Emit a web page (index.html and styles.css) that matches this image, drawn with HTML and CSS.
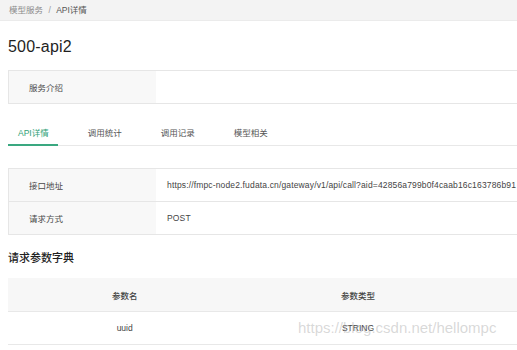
FILE: index.html
```html
<!DOCTYPE html>
<html lang="zh-CN">
<head>
    <meta charset="UTF-8">
    <meta name="viewport" content="width=device-width, initial-scale=1.0">
    <title>API详情</title>
    <link rel="stylesheet" href="styles.css">
</head>
<body>

    <div class="breadcrumb">
        <span class="crumb">模型服务</span>
        <span class="sep">/</span>
        <span class="crumb current">API详情</span>
    </div>

    <div class="page">
        <h1 class="title">500-api2</h1>

        <div class="info-table">
            <div class="info-row">
                <div class="label">服务介绍</div>
                <div class="value"></div>
            </div>
        </div>

        <div class="tabs">
            <div class="tab active">API详情</div>
            <div class="tab">调用统计</div>
            <div class="tab">调用记录</div>
            <div class="tab">模型相关</div>
        </div>

        <div class="info-table detail">
            <div class="info-row">
                <div class="label">接口地址</div>
                <div class="value">https://fmpc-node2.fudata.cn/gateway/v1/api/call?aid=42856a799b0f4caab16c163786b91</div>
            </div>
            <div class="info-row">
                <div class="label">请求方式</div>
                <div class="value">POST</div>
            </div>
        </div>

        <h3 class="section-title">请求参数字典</h3>

        <table class="param-table">
            <thead>
                <tr>
                    <th>参数名</th>
                    <th>参数类型</th>
                    <th></th>
                </tr>
            </thead>
            <tbody>
                <tr>
                    <td>uuid</td>
                    <td>STRING</td>
                    <td></td>
                </tr>
            </tbody>
        </table>
    </div>

    <div class="watermark">https://blog.csdn.net/hellompc</div>

</body>
</html>
```

FILE: styles.css
```css
html, body {
    overflow: hidden;
}

body {
    margin: 0;
    font-family: "Liberation Sans", "Noto Sans CJK SC", sans-serif;
    font-size: 8.5px;
    color: #444;
    background-color: #fff;
    position: relative;
}

.breadcrumb {
    height: 20px;
    line-height: 20px;
    padding-left: 9px;
    background-color: #f3f3f3;
    border-bottom: 1px solid #ebebeb;
    color: #8c8c8c;
}

.breadcrumb .sep {
    margin: 0 3px;
    color: #999;
}

.breadcrumb .current {
    color: #555;
}

.page {
    width: 760px;
    padding-left: 8px;
}

.title {
    margin: 15px 0 12px;
    font-size: 16px;
    line-height: 22px;
    font-weight: normal;
    letter-spacing: 0.2px;
    color: #1f1f1f;
}

.info-table {
    border: 1px solid #e6e6e6;
    border-right: none;
}

.info-row {
    display: flex;
    height: 32px;
    align-items: stretch;
}

.info-row + .info-row {
    border-top: 1px solid #e6e6e6;
}

.label {
    width: 127px;
    padding-left: 20px;
    background-color: #f8f8f8;
    display: flex;
    align-items: center;
    color: #4a4a4a;
}

.value {
    flex: 1;
    padding-left: 11px;
    display: flex;
    align-items: center;
    white-space: nowrap;
    letter-spacing: 0.15px;
    color: #444;
}

.tabs {
    display: flex;
    margin-top: 16px;
    border-bottom: 1px solid #e8e8e8;
}

.tab {
    padding: 6px 9px 4px 10px;
    line-height: 14px;
    margin-right: 20px;
    margin-bottom: -1px;
    border-bottom: 2px solid transparent;
    color: #555;
}

.tab.active {
    color: #2f9f78;
    border-bottom-color: #3aa880;
}

.detail {
    margin-top: 22px;
}

.section-title {
    margin: 15px 0 12px;
    font-size: 11px;
    line-height: 16px;
    font-weight: 500;
    color: #222;
}

.param-table {
    border-collapse: collapse;
    table-layout: fixed;
    width: 700px;
}

.param-table th,
.param-table td {
    width: 233px;
    text-align: center;
    border-bottom: 1px solid #e8e8e8;
    padding: 0;
    color: #444;
}

.param-table th {
    height: 33px;
    background-color: #f7f7f7;
    font-weight: 500;
}

.param-table td {
    height: 32px;
}

.watermark {
    position: absolute;
    left: 298px;
    top: 318px;
    font-size: 15px;
    line-height: 20px;
    color: rgba(170, 170, 170, 0.45);
    white-space: nowrap;
}
```
